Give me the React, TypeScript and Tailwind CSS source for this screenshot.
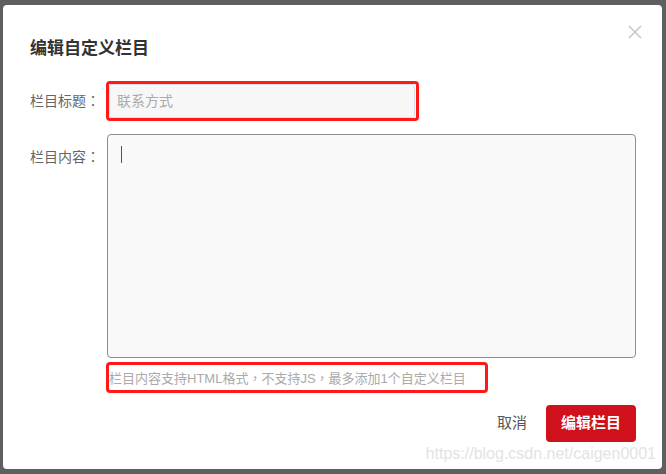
import React from "react";

const font = "font-['Liberation_Sans','Noto_Sans_CJK_SC',sans-serif]";
const tc = "font-['Noto_Sans_CJK_TC',sans-serif]";

export default function App() {
  return (
    <div className={`w-[666px] h-[474px] bg-[#5f5f5f] pt-[5px] pl-[3px] ${font}`}>
      <div className="relative w-[659px] h-[464px] rounded-[4px] bg-white pl-[27px] pr-[26px]">
        {/* close */}
        <button className="absolute right-[20px] top-[20px] text-[#c8c8c8]">
          <svg width="14" height="14" viewBox="0 0 14 14" fill="none" stroke="currentColor" strokeWidth="1.6">
            <path d="M1 1 L13 13 M13 1 L1 13" />
          </svg>
        </button>

        <h2 className="pt-[31px] h-[57px] leading-[26px] text-[17px] font-bold text-[#333]">编辑自定义栏目</h2>

        <div className="mt-[19px] flex items-center">
          <label className="w-[76px] text-[14px] text-[#666]">
            栏目标题<span className={tc}>：</span>
          </label>
          <div className="w-[313px] h-[40px] rounded-[4px] border-[3px] border-[#ff1a1a] pr-[1px]">
            <input
              className="w-full h-full rounded-[3px] border border-[#dcdfe6] bg-[#f7f7f8] px-[7px] text-[14px] text-[#333] placeholder:text-[#aaa] outline-none"
              placeholder="联系方式"
            />
          </div>
        </div>

        <div className="mt-[13px] flex">
          <label className="w-[77px] mt-[12px] leading-[20px] text-[14px] text-[#666]">
            栏目内容<span className={tc}>：</span>
          </label>
          <div className="relative w-[529px] h-[224px] rounded-[4px] border border-[#8e8e8e] bg-[#f9f9f9]">
            <span className="absolute left-[13px] top-[11px] w-[1px] h-[17px] bg-[#555]" />
          </div>
        </div>

        <div className="mt-[4px] ml-[76px] flex">
          <p className="w-[382px] h-[31px] rounded-[4px] border-[3px] border-[#ff1a1a] leading-[25px] text-[13px] text-[#aaa]">
            栏目内容支持HTML格式<span className={tc}>，</span>不支持JS<span className={tc}>，</span>最多添加1个自定义栏目
          </p>
        </div>

        <div className="mt-[12px] flex items-center justify-end gap-[19px]">
          <button className="text-[15px] text-[#555]">取消</button>
          <button className="w-[90px] h-[37px] rounded-[4px] bg-[#d0111b] text-[15px] font-bold text-white">编辑栏目</button>
        </div>

        <span className="absolute right-[6px] bottom-[3px] text-[16px] text-[#e3e3e3]">https://blog.csdn.net/caigen0001</span>
      </div>
    </div>
  );
}
